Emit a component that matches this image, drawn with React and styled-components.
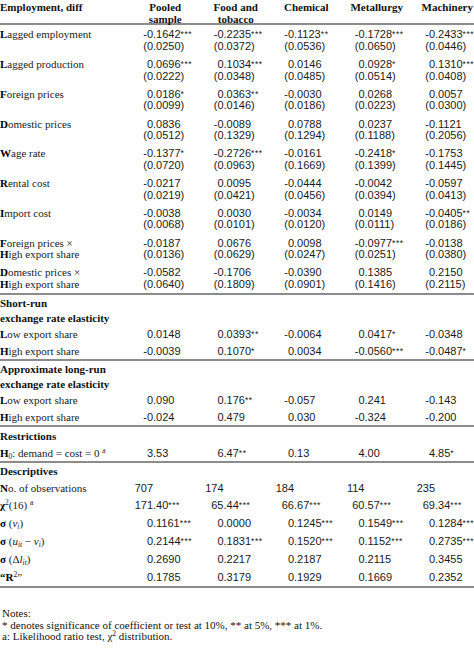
import React from "react";
import styled, { createGlobalStyle } from "styled-components";

const GlobalStyle = createGlobalStyle`
  html, body {
    margin: 0;
    padding: 0;
    background: #fff;
  }
`;

const COLS = "130px repeat(5, 70.5px)";
const SERIF = `"Liberation Serif", "Times New Roman", serif`;
const SANS = `"Liberation Sans", Arial, sans-serif`;
const RULE = "2px solid #8c8c8c";

const coefRows = [
  { label: ["Lagged employment"], vals: [["-0.1642***", "(0.0250)"], ["-0.2235***", "(0.0372)"], ["-0.1123**", "(0.0536)"], ["-0.1728***", "(0.0650)"], ["-0.2433***", "(0.0446)"]] },
  { label: ["Lagged production"], vals: [["0.0696***", "(0.0222)"], ["0.1034***", "(0.0348)"], ["0.0146", "(0.0485)"], ["0.0928*", "(0.0514)"], ["0.1310***", "(0.0408)"]] },
  { label: ["Foreign prices"], vals: [["0.0186*", "(0.0099)"], ["0.0363**", "(0.0146)"], ["-0.0030", "(0.0186)"], ["0.0268", "(0.0223)"], ["0.0057", "(0.0300)"]] },
  { label: ["Domestic prices"], vals: [["0.0836", "(0.0512)"], ["-0.0089", "(0.1329)"], ["0.0788", "(0.1294)"], ["0.0237", "(0.1188)"], ["-0.1121", "(0.2056)"]] },
  { label: ["Wage rate"], vals: [["-0.1377*", "(0.0720)"], ["-0.2726***", "(0.0963)"], ["-0.0161", "(0.1669)"], ["-0.2418*", "(0.1399)"], ["-0.1753", "(0.1445)"]] },
  { label: ["Rental cost"], vals: [["-0.0217", "(0.0219)"], ["0.0095", "(0.0421)"], ["-0.0444", "(0.0456)"], ["-0.0042", "(0.0394)"], ["-0.0597", "(0.0413)"]] },
  { label: ["Import cost"], vals: [["-0.0038", "(0.0068)"], ["0.0030", "(0.0101)"], ["-0.0034", "(0.0120)"], ["0.0149", "(0.0111)"], ["-0.0405**", "(0.0186)"]] },
  { label: ["Foreign prices ×", "High export share"], vals: [["-0.0187", "(0.0136)"], ["0.0676", "(0.0629)"], ["0.0098", "(0.0247)"], ["-0.0977***", "(0.0251)"], ["-0.0138", "(0.0380)"]] },
  { label: ["Domestic prices ×", "High export share"], vals: [["-0.0582", "(0.0640)"], ["-0.1706", "(0.1809)"], ["-0.0390", "(0.0901)"], ["0.1385", "(0.1416)"], ["0.2150", "(0.2115)"]] },
];

const shortRun = [
  { label: "Low export share", vals: ["0.0148", "0.0393**", "-0.0064", "0.0417*", "-0.0348"] },
  { label: "High export share", vals: ["-0.0039", "0.1070*", "0.0034", "-0.0560***", "-0.0487*"] },
];

const longRun = [
  { label: "Low export share", vals: ["0.090", "0.176**", "-0.057", "0.241", "-0.143"] },
  { label: "High export share", vals: ["-0.024", "0.479", "0.030", "-0.324", "-0.200"] },
];

const Page = styled.div`
  width: 474px;
  height: 648px;
  overflow: hidden;
  background: #fff;
  color: #111;
`;

const Table = styled.div`
  width: 482.5px;
`;

const Header = styled.div`
  display: grid;
  grid-template-columns: ${COLS};
  height: 25px;
  box-sizing: border-box;
  padding-top: 1px;
  border-bottom: ${RULE};
  font-family: ${SERIF};
  font-weight: 700;
  font-size: 11px;
  line-height: 12px;
`;

const HeadCell = styled.div`
  text-align: ${(p) => (p.$center ? "center" : "left")};
  white-space: nowrap;
`;

const CoefRow = styled.div`
  display: grid;
  grid-template-columns: ${COLS};
  height: 29.75px;
  box-sizing: border-box;
  padding-top: 4.25px;
  line-height: 11.5px;
`;

const Row = styled.div`
  display: grid;
  grid-template-columns: ${COLS};
  height: ${(p) => p.$h}px;
  align-items: center;
  line-height: 12px;
`;

const Label = styled.div`
  font-family: ${SERIF};
  font-size: 11px;
  font-weight: 400;
  color: #1a1a1a;
  white-space: nowrap;
`;

const LabelLine = styled.div`
  &::first-letter {
    font-weight: 700;
    color: #000;
  }
`;

const Section = styled.div`
  border-top: ${RULE};
  border-bottom: ${(p) => (p.$last ? RULE : "none")};
`;

const SectionTitle = styled.div`
  padding-top: ${(p) => p.$pad}px;
  font-family: ${SERIF};
  font-weight: 700;
  font-size: 11px;
  line-height: 15px;
  white-space: nowrap;
`;

const ValueCell = styled.div`
  padding-left: 3px;
  font-family: ${SANS};
  font-size: 11px;
  color: #1a1a1a;
  white-space: nowrap;
`;

const IntPart = styled.span`
  display: inline-block;
  width: 20px;
  text-align: right;
`;

const Stars = styled.span`
  font-size: 8.5px;
  letter-spacing: 0.6px;
  vertical-align: 1.5px;
  line-height: 0;
`;

const Sub = styled.sub`
  font-size: 7.5px;
  vertical-align: -2px;
  line-height: 0;
`;

const Sup = styled.sup`
  font-size: 7.5px;
  vertical-align: 4px;
  line-height: 0;
`;

const Notes = styled.div`
  margin-top: 20px;
  padding-left: 2px;
  font-family: ${SERIF};
  font-size: 11px;
  line-height: 11.5px;
  color: #111;
  white-space: nowrap;
`;

const Num = ({ v }) => {
  const m = v.match(/^(.*?)(\**)$/);
  const main = m[1];
  const stars = m[2];
  const dot = main.indexOf(".");
  const intPart = dot === -1 ? main : main.slice(0, dot);
  const rest = dot === -1 ? "" : main.slice(dot);
  return (
    <div>
      <IntPart>{intPart}</IntPart>
      {rest}
      {stars && <Stars>{stars}</Stars>}
    </div>
  );
};

const SimpleRow = ({ h, label, vals }) => (
  <Row $h={h}>
    <Label>
      <LabelLine>{label}</LabelLine>
    </Label>
    {vals.map((v, i) => (
      <ValueCell key={i}>
        <Num v={v} />
      </ValueCell>
    ))}
  </Row>
);

const App = () => (
  <Page>
    <GlobalStyle />
    <Table>
      <Header>
        <HeadCell>Employment, diff</HeadCell>
        <HeadCell $center>
          Pooled
          <br />
          sample
        </HeadCell>
        <HeadCell $center>
          Food and
          <br />
          tobacco
        </HeadCell>
        <HeadCell $center>Chemical</HeadCell>
        <HeadCell $center>Metallurgy</HeadCell>
        <HeadCell $center>Machinery</HeadCell>
      </Header>

      {coefRows.map((r) => (
        <CoefRow key={r.label.join(" ")}>
          <Label>
            {r.label.map((l) => (
              <LabelLine key={l}>{l}</LabelLine>
            ))}
          </Label>
          {r.vals.map((pair, i) => (
            <ValueCell key={i}>
              <Num v={pair[0]} />
              <Num v={pair[1]} />
            </ValueCell>
          ))}
        </CoefRow>
      ))}

      <Section>
        <SectionTitle $pad={1}>
          Short-run
          <br />
          exchange rate elasticity
        </SectionTitle>
        {shortRun.map((r) => (
          <SimpleRow key={r.label} h={16.5} label={r.label} vals={r.vals} />
        ))}
      </Section>

      <Section>
        <SectionTitle $pad={1}>
          Approximate long-run
          <br />
          exchange rate elasticity
        </SectionTitle>
        {longRun.map((r) => (
          <SimpleRow key={r.label} h={16.5} label={r.label} vals={r.vals} />
        ))}
      </Section>

      <Section>
        <SectionTitle $pad={2.5}>Restrictions</SectionTitle>
        <SimpleRow
          h={16.5}
          label={
            <>
              H<Sub>0</Sub>: demand = cost = 0 <Sup>a</Sup>
            </>
          }
          vals={["3.53", "6.47**", "0.13", "4.00", "4.85*"]}
        />
      </Section>

      <Section $last>
        <SectionTitle $pad={1.5}>Descriptives</SectionTitle>
        <SimpleRow h={17} label="No. of observations" vals={["707", "174", "184", "114", "235"]} />
        <SimpleRow
          h={18}
          label={
            <>
              χ<Sup>2</Sup>(16) <Sup>a</Sup>
            </>
          }
          vals={["171.40***", "65.44***", "66.67***", "60.57***", "69.34***"]}
        />
        <SimpleRow
          h={18}
          label={
            <>
              σ (<i>v</i>
              <Sub>
                <i>i</i>
              </Sub>
              )
            </>
          }
          vals={["0.1161***", "0.0000", "0.1245***", "0.1549***", "0.1284***"]}
        />
        <SimpleRow
          h={18}
          label={
            <>
              σ (<i>u</i>
              <Sub>
                <i>it</i>
              </Sub>{" "}
              − <i>v</i>
              <Sub>
                <i>i</i>
              </Sub>
              )
            </>
          }
          vals={["0.2144***", "0.1831***", "0.1520***", "0.1152***", "0.2735***"]}
        />
        <SimpleRow
          h={18}
          label={
            <>
              σ (Δ<i>l</i>
              <Sub>
                <i>it</i>
              </Sub>
              )
            </>
          }
          vals={["0.2690", "0.2217", "0.2187", "0.2115", "0.3455"]}
        />
        <SimpleRow
          h={18}
          label={
            <>
              “R<Sup>2</Sup>”
            </>
          }
          vals={["0.1785", "0.3179", "0.1929", "0.1669", "0.2352"]}
        />
      </Section>
    </Table>

    <Notes>
      <div>Notes:</div>
      <div>* denotes significance of coefficient or test at 10%, ** at 5%, *** at 1%.</div>
      <div>
        a: Likelihood ratio test, χ<Sup>2</Sup> distribution.
      </div>
    </Notes>
  </Page>
);

export default App;
